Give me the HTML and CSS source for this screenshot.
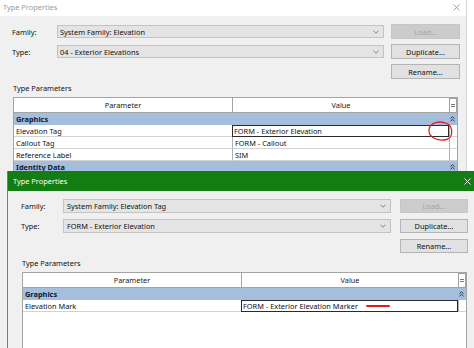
FILE: index.html
```html
<!DOCTYPE html>
<html>
<head>
<meta charset="utf-8">
<link rel="stylesheet" href="styles.css">
</head>
<body>
<div class="win win-back">
  <div class="title">
    <span>Type Properties</span>
    <svg class="close" width="7" height="7" viewBox="0 0 7 7"><path d="M0.5 0.5L6.5 6.5M6.5 0.5L0.5 6.5" /></svg>
  </div>
  <div class="body">
    <div class="row">
      <span class="lbl">Family:</span>
      <div class="combo"><span>System Family: Elevation</span><svg class="chev" width="6" height="4" viewBox="0 0 6 4"><path d="M0.5 0.8L3 3.2L5.5 0.8"/></svg></div>
      <div class="btn dis">Load...</div>
    </div>
    <div class="row">
      <span class="lbl">Type:</span>
      <div class="combo"><span>04 - Exterior Elevations</span><svg class="chev" width="6" height="4" viewBox="0 0 6 4"><path d="M0.5 0.8L3 3.2L5.5 0.8"/></svg></div>
      <div class="btn">Duplicate...</div>
    </div>
    <div class="row">
      <span class="lbl"></span>
      <div class="fill"></div>
      <div class="btn">Rename...</div>
    </div>
    <div class="tp">Type Parameters</div>
    <div class="table">
      <div class="th">Parameter</div>
      <div class="th th-v">Value</div>
      <div class="th th-eq"><svg width="4" height="5" viewBox="0 0 4 5"><path d="M0 1.5H4M0 3.5H4"/></svg></div>
      <div class="grp"><b>Graphics</b><svg class="col" width="5" height="6" viewBox="0 0 5 6"><path d="M0.5 2.6L2.5 0.8L4.5 2.6M0.5 5.2L2.5 3.4L4.5 5.2"/></svg></div>
      <div class="td">Elevation Tag</div>
      <div class="td tv focus">FORM - Exterior Elevation</div>
      <div class="td tn"></div>
      <div class="td">Callout Tag</div>
      <div class="td tv">FORM - Callout</div>
      <div class="td tn"></div>
      <div class="td">Reference Label</div>
      <div class="td tv">SIM</div>
      <div class="td tn"></div>
      <div class="grp"><b>Identity Data</b><svg class="col" width="5" height="6" viewBox="0 0 5 6"><path d="M0.5 2.6L2.5 0.8L4.5 2.6M0.5 5.2L2.5 3.4L4.5 5.2"/></svg></div>
    </div>
  </div>
</div>

<svg class="ring" width="30" height="28" viewBox="0 0 30 28"><path d="M21 4.5C14 1.5 4 3 3 10.5C2 18.5 12 22.5 20.5 20.5C26 19 27 12 24.5 7.5C23 5 20 3.8 16.5 3.6"/></svg>

<div class="win win-front">
  <div class="title">
    <span>Type Properties</span>
    <svg class="close" width="7" height="7" viewBox="0 0 7 7"><path d="M0.5 0.5L6.5 6.5M6.5 0.5L0.5 6.5" /></svg>
  </div>
  <div class="body">
    <div class="row">
      <span class="lbl">Family:</span>
      <div class="combo"><span>System Family: Elevation Tag</span><svg class="chev" width="6" height="4" viewBox="0 0 6 4"><path d="M0.5 0.8L3 3.2L5.5 0.8"/></svg></div>
      <div class="btn dis">Load...</div>
    </div>
    <div class="row">
      <span class="lbl">Type:</span>
      <div class="combo"><span>FORM - Exterior Elevation</span><svg class="chev" width="6" height="4" viewBox="0 0 6 4"><path d="M0.5 0.8L3 3.2L5.5 0.8"/></svg></div>
      <div class="btn">Duplicate...</div>
    </div>
    <div class="row">
      <span class="lbl"></span>
      <div class="fill"></div>
      <div class="btn">Rename...</div>
    </div>
    <div class="tp">Type Parameters</div>
    <div class="table table-tall">
      <div class="th">Parameter</div>
      <div class="th th-v">Value</div>
      <div class="th th-eq"><svg width="4" height="5" viewBox="0 0 4 5"><path d="M0 1.5H4M0 3.5H4"/></svg></div>
      <div class="grp"><b>Graphics</b><svg class="col" width="5" height="6" viewBox="0 0 5 6"><path d="M0.5 2.6L2.5 0.8L4.5 2.6M0.5 5.2L2.5 3.4L4.5 5.2"/></svg></div>
      <div class="td">Elevation Mark</div>
      <div class="td tv focus">FORM - Exterior Elevation Marker</div>
      <div class="td tn"></div>
    </div>
  </div>
</div>

<div class="mark"></div>
</body>
</html>
```

FILE: styles.css
```css
* { box-sizing: border-box; margin: 0; padding: 0; }

html, body {
  width: 474px;
  height: 348px;
  overflow: hidden;
  background: #ffffff;
}

body {
  position: relative;
  font-family: "Noto Sans", "Open Sans", sans-serif;
  font-size: 7.4px;
  color: #111111;
}

.win {
  background: #f0f0f0;
  overflow: hidden;
  display: flex;
  flex-direction: column;
}

.win-back {
  width: 467px;
  height: 348px;
  border-right: 1px solid #d6d6d6;
}

.win-front {
  position: absolute;
  left: 7px;
  top: 171px;
  width: 469px;
  height: 177px;
  border-left: 1px solid #7a7a7a;
}

.title {
  display: flex;
  align-items: center;
  justify-content: space-between;
  flex: none;
}

.win-back .title {
  height: 16px;
  background: #ffffff;
  color: #9b9b9b;
  padding: 0 6px 2px 3px;
}

.win-back .close path { stroke: #8c8c8c; stroke-width: 0.8; fill: none; }

.win-front .title {
  height: 20px;
  background: #137d13;
  color: #ffffff;
  padding: 0 5px 0 5px;
}

.win-front .close path { stroke: #ffffff; stroke-width: 1; fill: none; }

.body {
  flex: 1;
  display: flex;
  flex-direction: column;
}

.win-back .body { padding: 8px 7px 0 12px; }
.win-front .body { padding: 8px 8px 0 13px; }

.row {
  display: flex;
  align-items: center;
  height: 15px;
  margin-bottom: 5px;
  flex: none;
}

.win-front .row { height: 14px; margin-bottom: 6px; }

.lbl { width: 45px; flex: none; }
.win-front .lbl { width: 42px; }

.combo {
  width: 327px;
  height: 13px;
  flex: none;
  display: flex;
  align-items: center;
  justify-content: space-between;
  background: #e4e4e4;
  border: 1px solid #c3c3c3;
  padding: 0 4px 0 2px;
}

.win-front .combo { width: 328px; height: 14px; padding-left: 3px; }

.chev path { stroke: #6a6a6a; stroke-width: 0.8; fill: none; }

.fill { width: 327px; flex: none; }
.win-front .fill { width: 328px; }

.btn {
  margin-left: 7px;
  width: 69px;
  height: 15px;
  flex: none;
  display: flex;
  align-items: center;
  justify-content: center;
  background: #e1e1e1;
  border: 1px solid #b4b4b4;
}

.win-front .btn { margin-left: 9px; width: 68px; height: 14px; }

.btn.dis {
  background: #cccccc;
  border-color: #c6c6c6;
  color: #a3a3a3;
}

.tp {
  margin: -2px 0 0 1px;
  height: 12px;
  line-height: 12px;
  flex: none;
}

.table {
  margin: 3px 0 0 1px;
  width: 445px;
  border: 1px solid #a4a4a4;
  border-bottom: none;
  display: grid;
  grid-template-columns: 218px 217px 8px;
  grid-auto-rows: 12px;
  grid-template-rows: 15px;
  background: #ffffff;
  flex: none;
}

.table-tall { height: 120px; align-content: start; }

.th {
  height: 15px;
  display: flex;
  align-items: center;
  justify-content: center;
  background: #ffffff;
  border-bottom: 1px solid #a4a4a4;
  color: #222;
}

.th-v { border-left: 1px solid #a4a4a4; }

.th-eq { border: 1px solid #a0a0a0; }
.th-eq path { stroke: #555; stroke-width: 0.8; fill: none; }

.grp {
  grid-column: 1 / 4;
  display: flex;
  align-items: center;
  justify-content: space-between;
  background: #a5bedb;
  padding: 0 2px 0 2px;
  color: #0c1a33;
}

.grp b { font-weight: 700; }

.col path { stroke: #1f2a3a; stroke-width: 0.9; fill: none; }

.td {
  display: flex;
  align-items: center;
  padding-left: 2px;
  border-bottom: 1px solid #d2d2d2;
  background: #ffffff;
  white-space: nowrap;
}

.tv { border-left: 1px solid #b0b0b0; }
.tn { border-left: 1px solid #b0b0b0; padding: 0; }

.tv.focus {
  border: 1px solid #2a2a2a;
  padding-left: 1px;
}

.ring {
  position: absolute;
  left: 426px;
  top: 119px;
}

.ring path { stroke: #e02020; stroke-width: 1.3; fill: none; stroke-linecap: round; }

.mark {
  position: absolute;
  left: 366px;
  top: 305px;
  width: 24px;
  height: 2px;
  background: #dd1f1f;
  border-radius: 1px;
}
```
